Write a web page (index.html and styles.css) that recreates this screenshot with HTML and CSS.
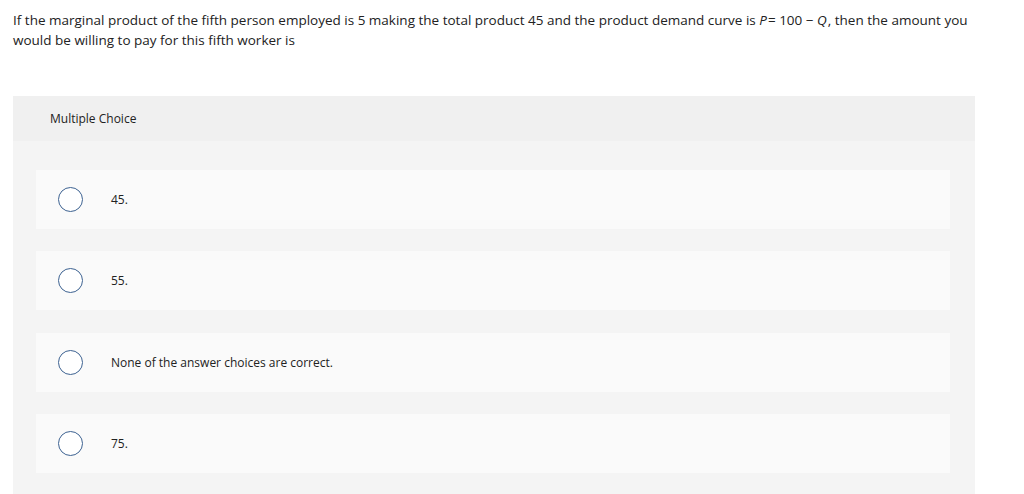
FILE: index.html
```html
<!DOCTYPE html>
<html>
<head>
<meta charset="utf-8">
<link rel="stylesheet" href="styles.css">
</head>
<body>
<div class="page">
  <p class="question">If the marginal product of the fifth person employed is 5 making the total product 45 and the product demand curve is <i>P</i>= 100 &minus; <i>Q</i>, then the amount you would be willing to pay for this fifth worker is</p>
  <section class="panel">
    <div class="panel-head">Multiple Choice</div>
    <div class="options">
      <div class="option"><span class="radio"></span><span class="label">45.</span></div>
      <div class="option"><span class="radio"></span><span class="label">55.</span></div>
      <div class="option"><span class="radio"></span><span class="label">None of the answer choices are correct.</span></div>
      <div class="option"><span class="radio"></span><span class="label">75.</span></div>
    </div>
  </section>
</div>
</body>
</html>
```

FILE: styles.css
```css
* { box-sizing: border-box; }
html, body { margin: 0; padding: 0; background: #fff; }
body {
  font-family: "Open Sans", "Liberation Sans", sans-serif;
  color: #222;
}
.page {
  padding: 10px 49px 0 13px;
}
.question {
  margin: 0;
  font-size: 13.5px;
  line-height: 20px;
  color: #222;
}
.question i { font-style: italic; padding-right: 1px; }
.panel {
  margin-top: 46px;
  background: #f4f4f4;
  padding-bottom: 21px;
}
.panel-head {
  background: #f0f0f0;
  height: 45px;
  display: flex;
  align-items: center;
  padding-left: 37px;
  font-size: 12px;
  color: #222;
}
.options {
  display: flex;
  flex-direction: column;
  gap: 22.3px;
  padding: 29px 25px 0 23px;
}
.option {
  background: #fafafa;
  height: 59px;
  display: flex;
  align-items: center;
  padding-left: 22px;
}
.radio {
  width: 25px;
  height: 25px;
  border: 1px solid #3d6291;
  border-radius: 50%;
  background: #fff;
  flex: none;
}
.label {
  margin-left: 28px;
  font-size: 12px;
  color: #222;
}
```
